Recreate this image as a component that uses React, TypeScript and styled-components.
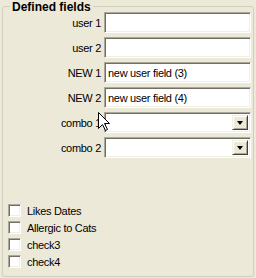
import { Fragment } from 'react';
import styled, { createGlobalStyle } from 'styled-components';

const GlobalStyle = createGlobalStyle`
  html, body {
    margin: 0;
    padding: 0;
    background: #ece9d8;
  }
  body {
    width: 256px;
    height: 278px;
    overflow: hidden;
    font-family: "Liberation Sans", Arial, sans-serif;
    font-size: 11px;
    letter-spacing: -0.3px;
    color: #000;
  }
`;

const Page = styled.div`
  position: relative;
  width: 256px;
  height: 278px;
  background: #ece9d8;
`;

const Group = styled.fieldset`
  box-sizing: border-box;
  height: 277px;
  margin: 0 2px;
  padding: 0 2px 6px 0;
  border: 1px solid #d0d0bf;
  border-radius: 3px;
  display: flex;
  flex-direction: column;
  min-width: 0;
`;

const Legend = styled.legend`
  margin-left: 7px;
  padding: 2px 2px 0;
  line-height: 11px;
  font-size: 12px;
  font-weight: bold;
  letter-spacing: 0;
`;

const Fields = styled.div`
  display: grid;
  grid-template-columns: 98px 1fr;
  column-gap: 3px;
  row-gap: 4px;
  margin-top: -1px;
  align-items: center;
`;

const Label = styled.label`
  text-align: right;
  white-space: nowrap;
`;

const sunken = `
  box-sizing: border-box;
  border-top: 1px solid #aca899;
  border-left: 1px solid #aca899;
  border-bottom: 1px solid #ffffff;
  border-right: 1px solid #ffffff;
  box-shadow: inset 1px 1px 0 #716f64, inset -1px -1px 0 #f1efe2;
  background: #fff;
`;

const TextBox = styled.input`
  ${sunken}
  height: 21px;
  width: 100%;
  margin: 0;
  padding: 0 2px 0 3px;
  font-family: "Liberation Sans", Arial, sans-serif;
  font-size: 11px;
  letter-spacing: -0.3px;
  color: #000;
  outline: none;
`;

const Combo = styled.div`
  ${sunken}
  height: 21px;
  width: 100%;
  display: flex;
  justify-content: flex-end;
  align-items: stretch;
  padding: 2px;
`;

const DropButton = styled.div`
  box-sizing: border-box;
  width: 16px;
  background: #ece9d8;
  border-top: 1px solid #f1efe2;
  border-left: 1px solid #f1efe2;
  border-bottom: 1px solid #404040;
  border-right: 1px solid #404040;
  box-shadow: inset 1px 1px 0 #ffffff, inset -1px -1px 0 #aca899;
  display: flex;
  align-items: center;
  justify-content: center;
`;

const Arrow = styled.span`
  width: 0;
  height: 0;
  border-left: 3.5px solid transparent;
  border-right: 3.5px solid transparent;
  border-top: 4px solid #000;
`;

const Checks = styled.div`
  margin-top: auto;
  margin-left: 5px;
  display: flex;
  flex-direction: column;
`;

const CheckRow = styled.div`
  display: flex;
  align-items: center;
  gap: 6px;
  height: 17px;
`;

const Box = styled.span`
  ${sunken}
  width: 13px;
  height: 13px;
  flex: none;
`;

const Cursor = styled.svg`
  position: absolute;
  left: 98px;
  top: 112px;
  pointer-events: none;
`;

const fields = [
  { label: 'user 1', value: '' },
  { label: 'user 2', value: '' },
  { label: 'NEW 1', value: 'new user field (3)' },
  { label: 'NEW 2', value: 'new user field (4)' },
];

const combos = ['combo 1', 'combo 2'];
const checks = ['Likes Dates', 'Allergic to Cats', 'check3', 'check4'];

export default function App() {
  return (
    <Page>
      <GlobalStyle />
      <Group>
        <Legend>Defined fields</Legend>
        <Fields>
          {fields.map((f) => (
            <Fragment key={f.label}>
              <Label>{f.label}</Label>
              <TextBox defaultValue={f.value} />
            </Fragment>
          ))}
          {combos.map((c) => (
            <Fragment key={c}>
              <Label>{c}</Label>
              <Combo>
                <DropButton>
                  <Arrow />
                </DropButton>
              </Combo>
            </Fragment>
          ))}
        </Fields>
        <Checks>
          {checks.map((c) => (
            <CheckRow key={c}>
              <Box />
              <span>{c}</span>
            </CheckRow>
          ))}
        </Checks>
      </Group>
      <Cursor width="13" height="20" viewBox="0 0 13 20">
        <path
          d="M0.5 0.5 L0.5 16.5 L4.5 12.5 L7.5 18.5 L9.5 17.5 L6.5 11.5 L11.5 11.5 Z"
          fill="#fff"
          stroke="#000"
          strokeWidth="1"
        />
      </Cursor>
    </Page>
  );
}
